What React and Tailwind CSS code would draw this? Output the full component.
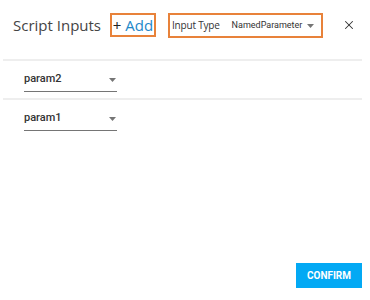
import { X } from "lucide-react";

const Caret = () => (
  <svg width="7" height="4" viewBox="0 0 7 4" className="text-[#757575] shrink-0">
    <path d="M0 0h7L3.5 4z" fill="currentColor" />
  </svg>
);

const ParamSelect = ({ value }) => (
  <div className="w-[93px] h-[24px] flex items-center justify-between border-b border-[#757575] pr-[1px]">
    <span className="text-[11px] font-medium text-[#333]" style={{ fontFamily: "Roboto, sans-serif" }}>{value}</span>
    <Caret />
  </div>
);

export default function App() {
  const params = ["param2", "param1"];

  return (
    <div className="w-[370px] h-[300px] bg-white flex flex-col" style={{ fontFamily: "'Open Sans', 'Noto Sans', sans-serif" }}>
      <div className="h-[59px] flex items-start pt-[13px] pl-[13px] pr-[13px] whitespace-nowrap">
        <span className="text-[15px] text-[#444] leading-[24px] w-[97px] shrink-0">Script Inputs</span>
        <button className="h-[24px] w-[46px] shrink-0 border-2 border-[#e8823a] flex items-center justify-center text-[15px] leading-none mr-[12px]">
          <span className="text-[#222] mr-[4px]">+</span>
          <span className="text-[#1e88c9]">Add</span>
        </button>
        <div className="h-[25px] w-[155px] shrink-0 border-2 border-[#e8823a] flex items-center pl-[2px] pr-[7px]">
          <span className="text-[10px] text-[#333] mr-[12px] tracking-[-0.2px]">Input Type</span>
          <span className="text-[9px] text-[#333] flex-1" style={{ fontFamily: "Roboto, sans-serif" }}>NamedParameter</span>
          <Caret />
        </div>
        <div className="flex-1" />
        <X size={14} strokeWidth={1.8} className="text-[#333] mt-[5px] mr-[1px]" />
      </div>
      <div className="h-[2px] bg-[#eeeeee] ml-[3px] mr-[8px]" />
      {params.map((p, i) => (
        <div key={p} className="flex flex-col">
          <div className="h-[37px] pl-[24px] pt-[7px]">
            <ParamSelect value={p} />
          </div>
          {i === 0 && <div className="h-[2px] bg-[#eeeeee] ml-[3px] mr-[8px]" />}
        </div>
      ))}
      <div className="flex-1" />
      <div className="flex justify-end pr-[8px] pb-[12px]">
        <button className="w-[66px] h-[25px] bg-[#03a9f4] text-white text-[10px] font-bold flex items-center justify-center" style={{ fontFamily: "Roboto, sans-serif" }}>
          CONFIRM
        </button>
      </div>
    </div>
  );
}
